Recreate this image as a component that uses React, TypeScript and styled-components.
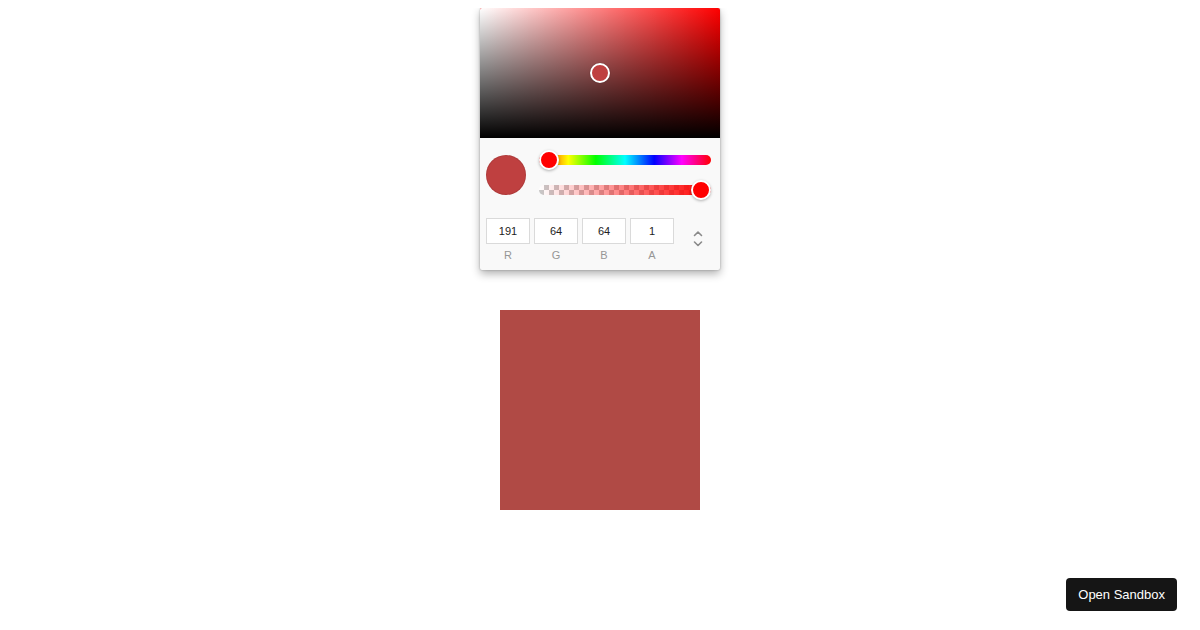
import React from "react";
import styled, { createGlobalStyle } from "styled-components";

const Global = createGlobalStyle`
  html, body { margin: 0; padding: 0; background: #fff; }
  body { margin: 8px; font-family: "Liberation Sans", Arial, sans-serif; }
`;

const Page = styled.div`
  display: flex;
  flex-direction: column;
  align-items: center;
  gap: 40px;
`;

const Card = styled.div`
  width: 240px;
  background: #f9f9f9;
  border-radius: 2px;
  box-shadow: 0 0 2px rgba(0, 0, 0, 0.3), 0 4px 8px rgba(0, 0, 0, 0.3);
  overflow: hidden;
`;

const Saturation = styled.div`
  position: relative;
  height: 130px;
  background: linear-gradient(to top, #000, rgba(0, 0, 0, 0)),
    linear-gradient(to right, #fff, rgba(255, 255, 255, 0)), #f00;
`;

const SatPointer = styled.div`
  position: absolute;
  left: 110px;
  top: 55px;
  width: 20px;
  height: 20px;
  box-sizing: border-box;
  border-radius: 50%;
  border: 2px solid #fff;
  background: #bf4040;
  box-shadow: 0 0 1px rgba(0, 0, 0, 0.5);
`;

const Body = styled.div`
  padding: 17px 6px 9px 6px;
`;

const Controls = styled.div`
  display: flex;
  align-items: center;
  gap: 13px;
`;

const Swatch = styled.div`
  width: 40px;
  height: 40px;
  border-radius: 50%;
  background: #bf4040;
  flex: none;
  box-shadow: inset 0 0 0 1px rgba(0, 0, 0, 0.08);
`;

const Sliders = styled.div`
  flex: 1;
  display: flex;
  flex-direction: column;
  gap: 20px;
  padding-right: 3px;
`;

const Track = styled.div<{ $kind: "hue" | "alpha" }>`
  position: relative;
  height: 10px;
  border-radius: 5px;
  background: ${(p) =>
    p.$kind === "hue"
      ? "linear-gradient(to right, #f00 0%, #ff0 17%, #0f0 33%, #0ff 50%, #00f 67%, #f0f 83%, #f00 100%)"
      : `linear-gradient(to right, rgba(255,0,0,0), #f00),
         repeating-conic-gradient(#c8c8c8 0% 25%, #ffffff 0% 50%) 0 0 / 10px 10px`};
`;

const Knob = styled.div<{ $left: string }>`
  position: absolute;
  top: 50%;
  left: ${(p) => p.$left};
  width: 20px;
  height: 20px;
  box-sizing: border-box;
  transform: translate(-50%, -50%);
  border-radius: 50%;
  background: #f00;
  border: 2px solid #fff;
  box-shadow: 0 1px 3px rgba(0, 0, 0, 0.3);
`;

const Fields = styled.div`
  display: flex;
  align-items: flex-start;
  gap: 4px;
  margin-top: 23px;
`;

const Field = styled.div`
  display: flex;
  flex-direction: column;
  align-items: center;
  width: 44px;
`;

const Input = styled.div`
  width: 44px;
  height: 26px;
  box-sizing: border-box;
  border: 1px solid #dadada;
  background: #fff;
  display: flex;
  align-items: center;
  justify-content: center;
  font-size: 11px;
  color: #222;
`;

const Label = styled.div`
  margin-top: 5px;
  font-size: 11px;
  color: #969696;
  line-height: 12px;
`;

const Toggle = styled.div`
  flex: 1;
  display: flex;
  justify-content: center;
  padding-top: 11px;
  padding-left: 4px;
`;

const ColorBox = styled.div`
  width: 200px;
  height: 200px;
  background: #b04a45;
`;

const SandboxButton = styled.button`
  position: fixed;
  right: 23px;
  bottom: 19px;
  height: 33px;
  padding: 0 12px;
  border: none;
  border-radius: 4px;
  background: #151515;
  color: #fff;
  font-family: "Liberation Sans", Arial, sans-serif;
  font-size: 13px;
`;

const fields = [
  ["191", "R"],
  ["64", "G"],
  ["64", "B"],
  ["1", "A"],
];

export default function App() {
  return (
    <>
      <Global />
      <Page>
        <Card>
          <Saturation>
            <SatPointer />
          </Saturation>
          <Body>
            <Controls>
              <Swatch />
              <Sliders>
                <Track $kind="hue">
                  <Knob $left="10px" />
                </Track>
                <Track $kind="alpha">
                  <Knob $left="calc(100% - 10px)" />
                </Track>
              </Sliders>
            </Controls>
            <Fields>
              {fields.map(([v, l]) => (
                <Field key={l}>
                  <Input>{v}</Input>
                  <Label>{l}</Label>
                </Field>
              ))}
              <Toggle>
                <svg width="12" height="20" viewBox="0 0 12 20" fill="none" stroke="#8a8a8a" strokeWidth="1.6" strokeLinecap="round" strokeLinejoin="round">
                  <path d="M2.5 6.5 L6 3 L9.5 6.5" />
                  <path d="M2.5 13 L6 16.5 L9.5 13" />
                </svg>
              </Toggle>
            </Fields>
          </Body>
        </Card>
        <ColorBox />
      </Page>
      <SandboxButton>Open Sandbox</SandboxButton>
    </>
  );
}
